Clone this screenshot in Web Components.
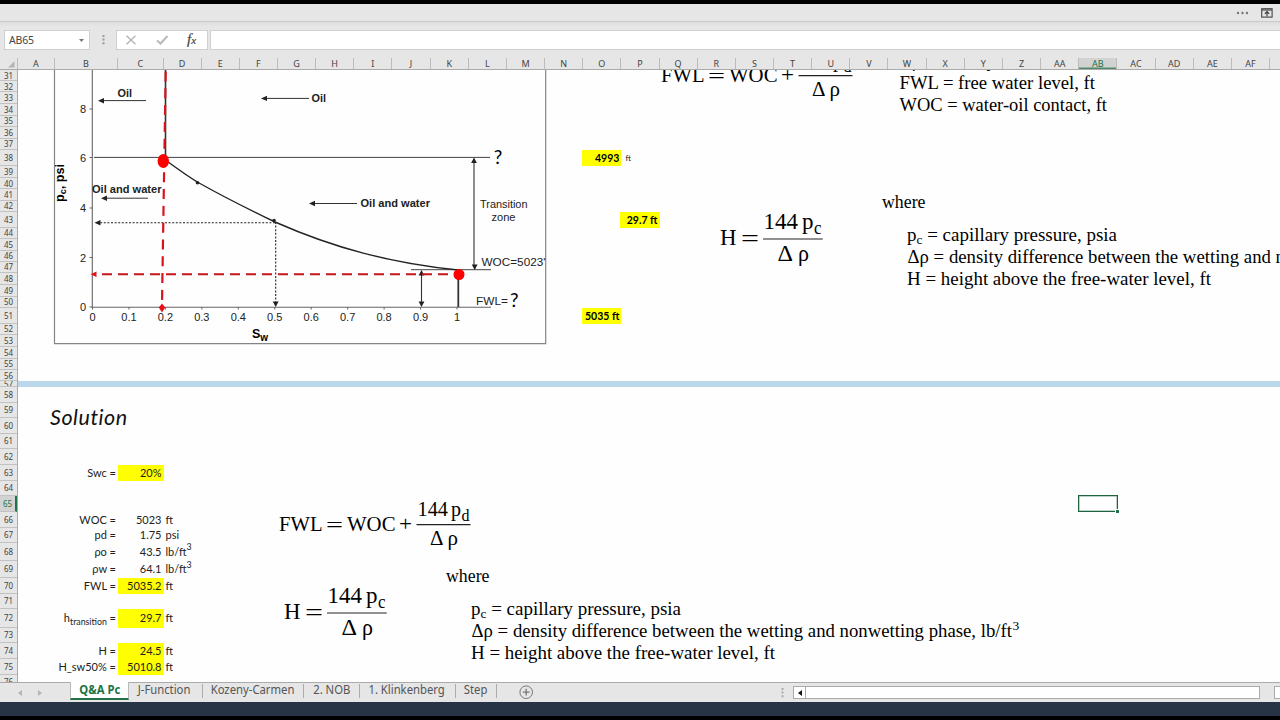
<!DOCTYPE html>
<html lang="en">
<head>
<meta charset="utf-8">
<title>Capillary pressure workbook</title>
<style>
  body {
    margin: 0;
    width: 1280px;
    height: 720px;
    overflow: hidden;
    background: #000;
    font-family: "Noto Sans", "Open Sans", sans-serif;
  }
</style>
</head>
<body>
<excel-window></excel-window>

<script>
const COLS = [37, 63, 45.5].concat(Array(30).fill(38.17));
// bottom edge of every visible row, starting at row 31
const ROW_EDGES = [81, 92, 104, 115.5, 127, 138.5, 150, 166, 178, 189, 200.5, 211.5, 227.5, 239, 250.5, 261.5, 273, 285, 296.5,
  308, 323.5, 335, 346.5, 358.5, 370, 381, 386.5, 402.5, 418, 433.5, 449, 464.5, 480.5, 496, 512, 527.5, 542.5, 560.5, 578,
  593.5, 609, 627.5, 643, 658.5, 674.5, 690];
const ROWS = ROW_EDGES.map((y, i) => y - (i ? ROW_EDGES[i - 1] : 70));
const FIRST_ROW = 31;

function colName(i) {
  return i < 26 ? String.fromCharCode(65 + i) : 'A' + String.fromCharCode(65 + i - 26);
}

class ExcelRibbon extends HTMLElement {
  constructor() {
    super();
    this.attachShadow({ mode: 'open' });
    this.shadowRoot.innerHTML = `
      <style>
        :host {
          display: flex;
          justify-content: flex-end;
          align-items: center;
          gap: 11px;
          height: 17px;
          padding-right: 7px;
          background: #e6e6e6;
          border-bottom: 1px solid #c9c9c9;
        }
        svg { display: block; }
      </style>
      <svg width="14" height="4"><g fill="#777"><circle cx="2" cy="2" r="1.200"/><circle cx="6.500" cy="2" r="1.200"/><circle cx="11" cy="2" r="1.200"/></g></svg>
      <svg width="12" height="10" fill="none" stroke="#444">
        <rect x=".7" y=".7" width="10.400" height="8.400" stroke-width="1.100"/>
        <path d="M1 2h10" stroke-width="1.200"/>
        <path d="M6 8.500V4M3.800 5.800L6 3.700l2.200 2.100" stroke-width="1.200"/>
      </svg>
    `;
  }
}
customElements.define('excel-ribbon', ExcelRibbon);

class FormulaBar extends HTMLElement {
  static get observedAttributes() {
    return ['cell'];
  }

  constructor() {
    super();
    this.attachShadow({ mode: 'open' });
    this.render();
  }

  attributeChangedCallback() {
    this.render();
  }

  render() {
    this.shadowRoot.innerHTML = `
      <style>
        :host {
          display: flex;
          height: 20px;
          padding: 8px 0 8px 4px;
          background: linear-gradient(#dedede, #e6e6e6 5px);
        }
        .name, .buttons, .input {
          box-sizing: border-box;
          background: #fff;
          border: 1px solid #d0d0d0;
        }
        .name {
          display: flex;
          align-items: center;
          justify-content: space-between;
          width: 86px;
          padding: 0 5px 0 4px;
          font-size: 10.500px;
          color: #444;
        }
        .name span { letter-spacing: -.15px; }
        .grip { width: 26px; display: flex; align-items: center; justify-content: center; }
        .buttons {
          display: flex;
          align-items: center;
          width: 92px;
          padding-left: 8px;
          gap: 19px;
        }
        .fx { font: italic 15px/18px "Liberation Serif", serif; color: #444; margin: -2px 0 0 -1px; -webkit-text-stroke: .2px #444; }
        .fx small { font-size: 11px; }
        .input { flex: 1; margin-left: 2px; border-right: 0; }
      </style>
      <div class="name"><span>${this.getAttribute('cell') || ''}</span>
        <svg width="5" height="3"><path d="M0 0h5L2.500 3z" fill="#777"/></svg></div>
      <div class="grip"><svg width="3" height="10" fill="#999"><path d="M.5 0h2v2h-2zM.5 3.600h2v2h-2zM.5 7.200h2v2h-2z"/></svg></div>
      <div class="buttons">
        <svg width="12" height="10" fill="none" stroke="#b5b5b5" stroke-width="1.400"><path d="M1.500 .8l9 8.400M10.500 .8l-9 8.400"/></svg>
        <svg width="13" height="10" fill="none" stroke="#b9b9b9" stroke-width="2"><path d="M1 5.500l3.500 3L11.500 1"/></svg>
        <span class="fx">f<small>x</small></span>
      </div>
      <div class="input"></div>
    `;
  }
}
customElements.define('formula-bar', FormulaBar);

class ColumnHeadings extends HTMLElement {
  constructor() {
    super();
    this.attachShadow({ mode: 'open' });
    const cells = COLS.map((w, i) =>
      `<div class="col ${colName(i) === 'AB' ? 'on' : ''}" style="width:${w}px">${i < 32 ? colName(i) : ''}</div>`).join('');
    this.shadowRoot.innerHTML = `
      <style>
        :host {
          display: flex;
          box-sizing: border-box;
          height: 12px;
          overflow: hidden;
          background: #e6e6e6;
          border-bottom: 1px solid #ababab;
        }
        .corner {
          flex: none;
          box-sizing: border-box;
          width: 18px;
          border-right: 1px solid #bcbcbc;
          display: flex;
          justify-content: flex-end;
          padding: 3px 2px 0 0;
        }
        .col {
          flex: none;
          box-sizing: border-box;
          border-right: 1px solid #bcbcbc;
          text-align: center;
          font-size: 9px;
          line-height: 12px;
          color: #444;
        }
        .on { background: #d2d2d2; color: #217346; box-shadow: inset 0 -1.500px #4f8c6c; }
      </style>
      <div class="corner"><svg width="7" height="7"><path d="M6.500 0v6.500H0z" fill="#b4b4b4"/></svg></div>${cells}
    `;
  }
}
customElements.define('column-headings', ColumnHeadings);

class RowHeadings extends HTMLElement {
  constructor() {
    super();
    this.attachShadow({ mode: 'open' });
    const cells = ROWS.map((h, i) =>
      `<div class="row ${i + FIRST_ROW === 65 ? 'on' : ''}" style="height:${h}px"><span>${i + FIRST_ROW}</span></div>`).join('');
    this.shadowRoot.innerHTML = `
      <style>
        :host {
          display: block;
          box-sizing: border-box;
          width: 18px;
          flex: none;
          overflow: hidden;
          background: #e6e6e6;
          border-right: 1px solid #ababab;
        }
        .row {
          display: flex;
          box-sizing: border-box;
          align-items: center;
          justify-content: center;
          overflow: hidden;
          border-bottom: 1px solid #c2c2c2;
          font-size: 9.600px;
          line-height: 11px;
          color: #444;
        }
        span { transform: scaleX(.83); }
        .on { background: #d2d2d2; color: #217346; border-right: 2px solid #217346; }
      </style>
      ${cells}
    `;
  }
}
customElements.define('row-headings', RowHeadings);

class SheetCell extends HTMLElement {
  constructor() {
    super();
    this.attachShadow({ mode: 'open' });
    this.shadowRoot.innerHTML = `
      <style>
        :host {
          display: flex;
          align-items: center;
          justify-content: flex-end;
          padding: 0 2px;
          white-space: pre;
          font: 11px/14px Lato, sans-serif;
          color: #222;
        }
        :host([fill]) { background: #ff0; }
        :host([left]) { justify-content: flex-start; }
        :host([bold]) { font-weight: 700; color: #000; font-size: 10.500px; margin-left: -1px; }
        :host([tiny]) { font-size: 8px; }
        ::slotted(sup), ::slotted(sub) { font-size: 8.800px; line-height: 0; }
        ::slotted(sup) { position: relative; top: -1px; }
      </style>
      <div><slot></slot></div>
    `;
  }

  connectedCallback() {
    const ref = this.getAttribute('at').match(/([A-Z]+)(\d+)/);
    this.style.gridColumn = ref[1].charCodeAt(0) - 64;
    this.style.gridRow = Number(ref[2]) - FIRST_ROW + 1;
  }
}
customElements.define('sheet-cell', SheetCell);

// A picture lying over the cells. Its svg uses window coordinates.
class SheetPicture extends HTMLElement {
  draw(x, y, w, h, body) {
    this.attachShadow({ mode: 'open' });
    this.shadowRoot.innerHTML = `
      <style>
        :host { display: block; position: absolute; left: ${x - 18}px; top: ${y - 70}px; width: ${w}px; height: ${h}px; }
        svg { display: block; font-family: "Liberation Serif", serif; }
        .chart { font-family: "Liberation Sans", sans-serif; font-size: 10.500px; fill: #222; }
        .mid { text-anchor: middle; }
        .bold { font-weight: 700; }
      </style>
      <svg width="${w}" height="${h}" viewBox="${x} ${y} ${w} ${h}">${body}</svg>
    `;
  }

  // text squeezed or stretched between x1 and x2
  fit(x1, x2, y, size, text, extra = '') {
    return `<text x="${x1}" y="${y}" font-size="${size}" textLength="${x2 - x1}" lengthAdjust="spacingAndGlyphs" ${extra}>${text}</text>`;
  }
}

class PcChart extends SheetPicture {
  constructor() {
    super();
    const yl = [[8, 109], [6, 157.5], [4, 208], [2, 257.5], [0, 307]].map(([t, y]) =>
      `<text class="mid" x="83" y="${y + 4}" font-size="11">${t}</text><path d="M89.500 ${y}h3" stroke="#666"/>`).join('');
    const xl = ['0', '0.1', '0.2', '0.3', '0.4', '0.5', '0.6', '0.7', '0.8', '0.9', '1'].map((t, i) => {
      const x = 92.5 + i * 36.45;
      return `<text class="mid" x="${x}" y="321.300" font-size="11">${t}</text><path d="M${x} 307v2.500" stroke="#666"/>`;
    }).join('');
    const left = (x, y, c = '#222') => `<path d="M${x} ${y}l6 -2.700v5.400z" fill="${c}"/>`;
    const down = (x, y, c = '#222') => `<path d="M${x} ${y}l-2.900 -5.500h5.800z" fill="${c}"/>`;
    const up = (x, y) => `<path d="M${x} ${y}l-2.900 5.500h5.800z" fill="#222"/>`;
    this.draw(50, 70, 500, 278, `<g class="chart">
      <path d="M54.500 60V343.700H545.700V60" fill="none" stroke="#858585" stroke-width="1.200"/>
      <path d="M92.300 60V307.300H491" fill="none" stroke="#666" stroke-width="1.100"/>
      ${yl}${xl}
      <path d="M94 157.400H490M411 269.700H491" stroke="#444" stroke-width="1"/>
      <path d="M165.500 70V158" stroke="#333" stroke-width="1.600"/>
      <path d="M164 159C182 172 190 178 200 183.500C224 197 248 209 275 222C334 248 390 263 458 270" fill="none" stroke="#222" stroke-width="1.400"/>
      <path d="M458.300 270V307" stroke="#333" stroke-width="1.800"/>
      <circle cx="197.500" cy="182.700" r="1.800"/><circle cx="274" cy="220.500" r="1.800"/>
      <path d="M275 222.700H98M275.700 222V303" fill="none" stroke="#222" stroke-width="1.100" stroke-dasharray="2 1.600"/>
      ${left(94.5, 222.7)}${down(275.7, 307)}
      <path d="M146 100.600H102M309 98.400H265M148 198.200H105M357 203.500H313" stroke="#333" stroke-width="1"/>
      ${left(98, 100.8)}${left(261, 98.4)}${left(101, 198.2)}${left(309, 203.5)}
      <path d="M474 161V267M421.500 273V304" stroke="#333" stroke-width="1.100"/>
      ${up(474, 157.5)}${down(474.7, 270)}${up(421.5, 270)}${down(421.5, 307)}
      <path d="M165.700 71.500L162 304" stroke="#d8131b" stroke-width="2.200" stroke-dasharray="10 6.800"/>
      <path d="M448 274.200H96" stroke="#c8161c" stroke-width="2" stroke-dasharray="10 6"/>
      ${left(90.5, 274.2, '#e80f16')}
      <path d="M162 312.500l-3.200 -5 3.200 -4 3.200 4z" fill="#e80f16"/>
      <ellipse cx="163.300" cy="161" rx="5.700" ry="7" fill="#f00"/>
      <circle cx="459" cy="274.500" r="5.500" fill="#f00"/>
      ${this.fit(117.5, 132, 96.800, 11.500, 'Oil', 'class="bold"')}
      ${this.fit(311.5, 326, 102.300, 11.500, 'Oil', 'class="bold"')}
      ${this.fit(92, 161.500, 192.500, 11.500, 'Oil and water', 'class="bold"')}
      ${this.fit(360.500, 430, 207, 11.500, 'Oil and water', 'class="bold"')}
      ${this.fit(480, 527.500, 208, 11, 'Transition')}
      ${this.fit(491.500, 515.500, 221.300, 11, 'zone')}
      ${this.fit(481.500, 545.500, 266, 11, "WOC=5023'")}
      ${this.fit(476, 508, 304.500, 11, 'FWL=')}
      <g font-family="Lato, sans-serif" fill="#000"><text x="493.800" y="164" font-size="19">?</text><text x="510" y="306.500" font-size="19">?</text></g>
      <text class="bold" x="252" y="337.500" font-size="12.500" fill="#000">S<tspan font-size="10" dy="3">w</tspan></text>
      <text class="bold" transform="translate(64 202) rotate(-90)" font-size="12.500" fill="#000" textLength="38" lengthAdjust="spacingAndGlyphs">p<tspan font-size="9" dy="2">c</tspan><tspan dy="-2">, psi</tspan></text>
    </g>`);
  }
}
customElements.define('pc-chart', PcChart);

class FwlEquation extends SheetPicture {
  connectedCallback() {
    const x = Number(this.getAttribute('x'));
    const y = Number(this.getAttribute('y'));
    this.draw(x, y, 200, 60, `<g transform="translate(${x - 275} ${y - 495})">
      ${this.fit(279, 322.500, 530.500, 21, 'FWL')}
      ${this.fit(326, 343, 531.500, 21, '=')}
      ${this.fit(347, 395.500, 530.500, 21, 'WOC')}
      ${this.fit(399, 412, 531, 21, '+')}
      ${this.fit(417.500, 448, 516.200, 21, '144')}
      ${this.fit(451, 461, 516.200, 21, 'p')}
      ${this.fit(461.500, 469.500, 520.800, 16, 'd')}
      <path d="M416.500 524.600H470.500" stroke="#222" stroke-width="1.100"/>
      ${this.fit(430, 443.500, 544.700, 21, 'Δ')}
      ${this.fit(447.500, 458, 544.700, 21, 'ρ')}
    </g>`);
  }
}
customElements.define('fwl-equation', FwlEquation);

class HeightEquation extends SheetPicture {
  connectedCallback() {
    const x = Number(this.getAttribute('x'));
    const y = Number(this.getAttribute('y'));
    this.draw(x, y, 750, 105, `<g transform="translate(${x - 280} ${y - 565})">
      ${this.fit(284, 300.500, 619, 24, 'H')}
      ${this.fit(305, 323, 620, 23, '=')}
      ${this.fit(327.500, 362, 602.500, 24, '144')}
      ${this.fit(366, 377.500, 602.500, 24, 'p')}
      ${this.fit(378, 385.500, 608, 18, 'c')}
      <path d="M327 613H386.700" stroke="#222" stroke-width="1.200"/>
      ${this.fit(341.500, 357, 635.300, 24, 'Δ')}
      ${this.fit(362, 373, 635.300, 24, 'ρ')}
      ${this.fit(446, 489.500, 581.700, 18.500, 'where')}
      ${this.fit(471, 681, 615, 18.500, 'p<tspan font-size="13" dy="3">c</tspan><tspan dy="-3"> = capillary pressure, psia</tspan>')}
      ${this.fit(471.500, 1012, 637, 18.500, 'Δρ = density difference between the wetting and nonwetting phase, lb/ft')}
      <text x="1012.500" y="629.500" font-size="13.500">3</text>
      ${this.fit(471, 775, 658.700, 18.500, 'H = height above the free-water level, ft')}
    </g>`);
  }
}
customElements.define('height-equation', HeightEquation);

class FwlLegend extends SheetPicture {
  constructor() {
    super();
    this.draw(895, 70, 230, 50, `
      ${this.fit(899.5, 1077, 66.500, 18.500, 'Δρ = density difference')}
      ${this.fit(899.500, 1095, 89, 18.500, 'FWL = free water level, ft')}
      ${this.fit(899.500, 1107, 110.500, 18.500, 'WOC = water-oil contact, ft')}`);
  }
}
customElements.define('fwl-legend', FwlLegend);

class SheetGrid extends HTMLElement {
  constructor() {
    super();
    this.attachShadow({ mode: 'open' });
    this.shadowRoot.innerHTML = `
      <style>
        :host { display: block; position: relative; flex: 1; overflow: hidden; background: #fefefe; }
        .cells {
          display: grid;
          grid-template-columns: ${COLS.map(w => w + 'px').join(' ')};
          grid-template-rows: ${ROWS.map(h => h + 'px').join(' ')};
        }
        .band { grid-row: 27; grid-column: 1 / -1; background: #bdd7ea; }
        .title { grid-row: 29 / 31; grid-column: 1 / 6; display: flex; align-items: center; padding: 0 0 1px 32px;
          font: italic 21.500px/1 Lato, sans-serif; letter-spacing: .55px; color: #111; }
        .cursor { grid-row: 35; grid-column: 28; margin: -1px -1px 0 -1px; border: 1px solid #1f6440;
          box-shadow: inset 0 0 0 .5px #7aa68d; position: relative; }
        .cursor::after { content: ""; position: absolute; right: -2px; bottom: -2px; width: 3px; height: 3px;
          background: #217346; border: 1px solid #fff; border-right: 0; border-bottom: 0; }
      </style>
      <div class="cells">
        <div class="band"></div>
        <div class="title">Solution</div>
        <sheet-cell at="O38" fill bold>4993</sheet-cell><sheet-cell at="P38" left tiny> ft</sheet-cell>
        <sheet-cell at="P43" fill bold>29.7 ft</sheet-cell>
        <sheet-cell at="O51" fill bold>5035 ft</sheet-cell>
        <sheet-cell at="B63">Swc =</sheet-cell><sheet-cell at="C63" fill>20%</sheet-cell>
        <sheet-cell at="B66">WOC =</sheet-cell><sheet-cell at="C66">5023</sheet-cell><sheet-cell at="D66" left>ft</sheet-cell>
        <sheet-cell at="B67">pd =</sheet-cell><sheet-cell at="C67">1.75</sheet-cell><sheet-cell at="D67" left>psi</sheet-cell>
        <sheet-cell at="B68">ρo =</sheet-cell><sheet-cell at="C68">43.5</sheet-cell><sheet-cell at="D68" left>lb/ft<sup>3</sup></sheet-cell>
        <sheet-cell at="B69">ρw =</sheet-cell><sheet-cell at="C69">64.1</sheet-cell><sheet-cell at="D69" left>lb/ft<sup>3</sup></sheet-cell>
        <sheet-cell at="B70">FWL =</sheet-cell><sheet-cell at="C70" fill>5035.2</sheet-cell><sheet-cell at="D70" left>ft</sheet-cell>
        <sheet-cell at="B72">h<sub>transition</sub> =</sheet-cell><sheet-cell at="C72" fill>29.7</sheet-cell><sheet-cell at="D72" left>ft</sheet-cell>
        <sheet-cell at="B74">H =</sheet-cell><sheet-cell at="C74" fill>24.5</sheet-cell><sheet-cell at="D74" left>ft</sheet-cell>
        <sheet-cell at="B75">H_sw50% =</sheet-cell><sheet-cell at="C75" fill>5010.8</sheet-cell><sheet-cell at="D75" left>ft</sheet-cell>
        <div class="cursor"></div>
      </div>
      <pc-chart></pc-chart>
      <fwl-equation x="657" y="45.800"></fwl-equation>
      <fwl-legend></fwl-legend>
      <height-equation x="716.200" y="191.400"></height-equation>
      <fwl-equation x="275" y="495"></fwl-equation>
      <height-equation x="280" y="565"></height-equation>
    `;
  }
}
customElements.define('sheet-grid', SheetGrid);

class SheetTab extends HTMLElement {
  constructor() {
    super();
    this.attachShadow({ mode: 'open' });
    this.shadowRoot.innerHTML = `
      <style>
        :host {
          display: flex;
          box-sizing: border-box;
          justify-content: center;
          height: 14px;
          margin-top: 1px;
          border-right: 1px solid #ababab;
          white-space: nowrap;
          font-size: 12px;
          line-height: 11px;
          color: #555;
        }
        :host([active]) {
          height: 18px;
          margin-top: -1px;
          line-height: 15px;
          background: #fff;
          border-right: 1px solid #bbb;
          border-left: 1px solid #bbb;
          border-bottom: 2px solid #217346;
          color: #217346;
          font-weight: 700;
        }
        div { transform: scaleX(.94); }
      </style>
      <div><slot></slot></div>
    `;
  }
}
customElements.define('sheet-tab', SheetTab);

class SheetTabs extends HTMLElement {
  constructor() {
    super();
    this.attachShadow({ mode: 'open' });
    this.shadowRoot.innerHTML = `
      <style>
        :host {
          display: flex;
          box-sizing: border-box;
          height: 20px;
          background: #e6e6e6;
          border-top: 1px solid #ababab;
        }
        .arrows { width: 70px; display: flex; gap: 15px; padding: 7px 0 0 18px; box-sizing: border-box; }
        .plus { margin: 2px 0 0 22px; }
        .fill { flex: 1; }
        .grip { margin: 5px 9.500px 0 0; }
        .scroll, .next { box-sizing: border-box; height: 13px; margin-top: 3px; background: #fff; border: 1px solid #ababab; }
        .scroll { width: 467px; display: flex; }
        .scroll div { width: 11px; border-right: 1px solid #ababab; display: flex; align-items: center; justify-content: center; }
        .next { width: 6px; margin-left: 14px; border-right: 0; }
      </style>
      <div class="arrows">
        <svg width="5" height="6"><path d="M4 0v6L0 3z" fill="#b5b5b5"/></svg>
        <svg width="5" height="6"><path d="M0 0v6l4-3z" fill="#b5b5b5"/></svg>
      </div>
      <sheet-tab active style="width:59px">Q&amp;A Pc</sheet-tab>
      <sheet-tab style="width:73.500px;padding-right:2px">J-Function</sheet-tab>
      <sheet-tab style="width:101.500px">Kozeny-Carmen</sheet-tab>
      <sheet-tab style="width:55.500px">2. NOB</sheet-tab>
      <sheet-tab style="width:96px">1. Klinkenberg</sheet-tab>
      <sheet-tab style="width:41.500px">Step</sheet-tab>
      <svg class="plus" width="15" height="15" fill="none" stroke="#777"><circle cx="7.200" cy="7.200" r="6.300"/><path d="M7.200 3.800v6.800M3.800 7.200h6.800" stroke-width="1.300"/></svg>
      <div class="fill"></div>
      <svg class="grip" width="3" height="10" fill="#aaa"><path d="M.5 0h2v2h-2zM.5 3.600h2v2h-2zM.5 7.200h2v2h-2z"/></svg>
      <div class="scroll"><div><svg width="4" height="6"><path d="M4 0v6L0 3z" fill="#111"/></svg></div></div>
      <div class="next"></div>
    `;
  }
}
customElements.define('sheet-tabs', SheetTabs);

class ExcelWindow extends HTMLElement {
  constructor() {
    super();
    this.attachShadow({ mode: 'open' });
    this.shadowRoot.innerHTML = `
      <style>
        :host {
          display: flex;
          flex-direction: column;
          box-sizing: border-box;
          width: 1280px;
          height: 720px;
          padding: 4px 0;
          overflow: hidden;
        }
        .sheet { display: flex; height: 612px; }
        .status { height: 14px; background: #263445; }
      </style>
      <excel-ribbon></excel-ribbon>
      <formula-bar cell="AB65"></formula-bar>
      <column-headings></column-headings>
      <div class="sheet"><row-headings></row-headings><sheet-grid></sheet-grid></div>
      <sheet-tabs></sheet-tabs>
      <div class="status"></div>
    `;
  }
}
customElements.define('excel-window', ExcelWindow);
</script>
</body>
</html>
